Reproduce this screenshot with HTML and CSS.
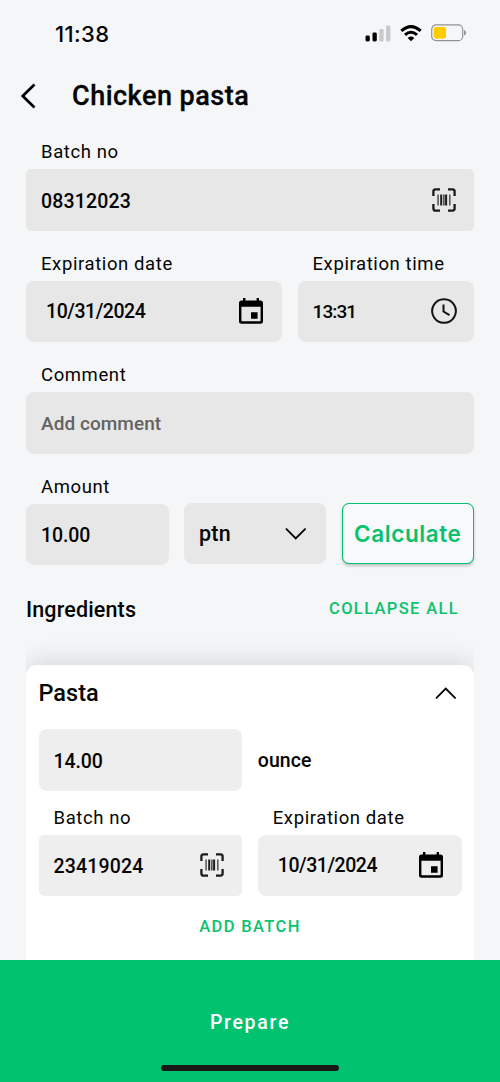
FILE: index.html
```html
<!DOCTYPE html>
<html lang="en">
<head>
<meta charset="utf-8">
<title>Chicken pasta</title>
<link rel="stylesheet" href="styles.css">
</head>
<body>
<svg class="defs" width="0" height="0">
  <symbol id="scan" viewBox="0 0 24 24">
    <path d="M1.400 8V3.400Q1.400 1.400 3.400 1.400H8M16 1.400h4.600q2 0 2 2V8M22.600 16v4.600q0 2-2 2H16M8 22.600H3.400q-2 0-2-2V16" fill="none" stroke="#1b1b1b" stroke-width="2.300"/>
    <path d="M5.500 6.500h1.100v11h-1.100zM8.200 6.500h2v11h-2zM11.300 6.500h1.200v11h-1.200zM13.100 6.500h2v11h-2zM17.300 6.500h1.100v11h-1.100z" fill="#1b1b1b"/>
  </symbol>
  <symbol id="calendar" viewBox="0 0 24 26">
    <path fill-rule="evenodd" d="M4 0h2.400v2.500h11.200V0H20v2.500h1.500Q24 2.500 24 5v18.200q0 2.500-2.500 2.500h-19Q0 25.700 0 23.200V5Q0 2.500 2.500 2.500H4zM2.400 8.800V22.200q0 1 1 1h17.200q1 0 1-1V8.800zM12 14.300h6.600v6.500H12z"/>
  </symbol>
  <symbol id="clock" viewBox="0 0 26 26">
    <path d="M13 1.200a11.800 11.800 0 1 0 .01 0M12.500 6.500v7l6 3.700" fill="none" stroke="#111" stroke-width="2"/>
  </symbol>
</svg>
<div class="screen">
  <div class="status">
    <span class="time">11:38</span>
    <div class="indicators">
      <svg width="26" height="17" viewBox="0 0 26 17">
        <rect x="0.500" y="10.500" width="4.300" height="6" rx="1.400"/>
        <rect x="7.500" y="7.500" width="4.300" height="9" rx="1.400"/>
        <rect x="14.300" y="4" width="4.300" height="12.500" rx="1.400" fill="#c8c9ca"/>
        <rect x="21.100" y="0.500" width="4.300" height="16" rx="1.400" fill="#c8c9ca"/>
      </svg>
      <svg class="wifi" width="22" height="17" viewBox="0 0 22 17">
        <path d="M1.300 5.900Q11-2.700 20.700 5.900M5 9.900Q11 4.700 17 9.900" fill="none" stroke="#000" stroke-width="3"/>
        <path d="M11 16.300L7.700 12.900Q11 10.200 14.300 12.900z"/>
      </svg>
      <svg class="battery" width="36" height="18" viewBox="0 0 36 18">
        <rect x="0.700" y="0.900" width="31" height="15.800" rx="4.500" fill="none" stroke="#929394" stroke-width="1.200"/>
        <rect x="2.700" y="2.900" width="12.400" height="11.800" rx="2.400" fill="#fc0"/>
        <path d="M33 6q2.200.8 2.200 2.800T33 11.600z" fill="#929394"/>
      </svg>
    </div>
  </div>
  <header class="header">
    <svg width="16" height="26" viewBox="0 0 16 26"><path d="M14.500 1.500L2.700 13 14.500 24.500" fill="none" stroke="#000" stroke-width="2.700"/></svg>
    <h1>Chicken pasta</h1>
  </header>
  <main class="form">
    <div class="group">
      <label>Batch no</label>
      <div class="field sharp"><span class="number">08312023</span><svg class="scan"><use href="#scan"/></svg></div>
    </div>
    <div class="row">
      <div class="group date">
        <label>Expiration date</label>
        <div class="field inset"><span class="day">10/31/2024</span><svg class="calendar"><use href="#calendar"/></svg></div>
      </div>
      <div class="group grow">
        <label>Expiration time</label>
        <div class="field"><span class="hour">13:31</span><svg class="clock"><use href="#clock"/></svg></div>
      </div>
    </div>
    <div class="group">
      <label>Comment</label>
      <div class="field"><span class="placeholder">Add comment</span></div>
    </div>
    <div class="row amount">
      <div class="group qty">
        <label>Amount</label>
        <div class="field"><span class="decimal">10.00</span></div>
      </div>
      <div class="field unit"><span>ptn</span>
        <svg class="chevron" viewBox="0 0 22 13"><path d="M1.500 2L11 11.500 20.500 2"/></svg>
      </div>
      <button class="calculate">Calculate</button>
    </div>
    <div class="section">
      <h2>Ingredients</h2>
      <a class="link collapse">COLLAPSE ALL</a>
    </div>
    <div class="list">
      <section class="card">
        <div class="card-head">
          <h3>Pasta</h3>
          <svg class="chevron" viewBox="0 0 22 13"><path d="M1.500 11L11 1.500l9.500 9.500"/></svg>
        </div>
        <div class="pair weight">
          <div class="field"><span class="decimal">14.00</span></div>
          <span class="ounce">ounce</span>
        </div>
        <div class="pair">
          <div class="group">
            <label>Batch no</label>
            <div class="field sharp"><span class="number">23419024</span><svg class="scan"><use href="#scan"/></svg></div>
          </div>
          <div class="group">
            <label>Expiration date</label>
            <div class="field inset"><span class="day">10/31/2024</span><svg class="calendar"><use href="#calendar"/></svg></div>
          </div>
        </div>
        <a class="link add">ADD BATCH</a>
      </section>
    </div>
  </main>
  <footer class="footer">
    <span class="prepare">Prepare</span>
    <div class="home"></div>
  </footer>
</div>
</body>
</html>
```
FILE: styles.css
```css
* { box-sizing: border-box; }
body { margin: 0; font-family: Roboto, sans-serif; color: #050505; }
h1, h2, h3 { margin: 0; font-weight: 500; }
.defs { display: block; position: absolute; }
.screen { width: 500px; height: 1082px; background: #f4f6f8; display: flex; flex-direction: column; overflow: hidden; }
.status { height: 66px; flex: none; padding: 0 33px 0 55px; display: flex; align-items: center; justify-content: space-between; }
.time { font: 500 22px/26px Inter, sans-serif; letter-spacing: 0.35px; padding-top: 1px; }
.indicators { display: flex; align-items: center; }
.wifi { margin-left: 9px; }
.battery { margin-left: 9px; }
.header { height: 75px; flex: none; padding: 17px 20px 0; display: flex; align-items: flex-start; }
.header h1 { font-size: 27px; line-height: 27px; letter-spacing: 0.5px; margin-left: 36px; -webkit-text-stroke: 0.3px; }
.form { flex: 1; min-height: 0; padding: 0 26px; display: flex; flex-direction: column; }
.form > .group, .row { flex: none; margin-bottom: 22px; }
.row { display: flex; gap: 15.500px; }
label { display: block; height: 28px; padding-left: 15px; font-size: 18.500px; line-height: 22px; letter-spacing: 0.6px; white-space: nowrap; }
.field { height: 61.500px; border-radius: 8px; background: #e7e7e7; padding: 0 18px 0 15px; display: flex; align-items: center; justify-content: space-between; font-weight: 500; font-size: 19.500px; white-space: nowrap; }
.sharp { border-radius: 5px; }
.inset { padding-left: 20px; padding-right: 19px; }
.date { width: 256px; }
.grow { flex: 1; }
.number { letter-spacing: 0.15px; padding-top: 3px; }
.day { letter-spacing: -0.45px; padding-top: 1px; }
.hour { font-size: 19px; letter-spacing: -0.900px; padding-top: 1px; }
.decimal { letter-spacing: -0.1px; padding-top: 3px; }
.placeholder { color: #636363; font-size: 19px; letter-spacing: 0.05px; padding-top: 2px; }
.scan { width: 24px; height: 24px; }
.calendar { width: 24px; height: 26px; margin-top: -1px; }
.clock { width: 26px; height: 26px; margin-right: -1px; }
.chevron { width: 21.500px; height: 13px; }
.chevron path { fill: none; stroke: #050505; stroke-width: 1.900; stroke-linecap: round; }
.amount { align-items: flex-end; height: 89.500px; }
.qty { width: 142.500px; flex: none; }
.unit { width: 142px; margin-bottom: 1px; flex: none; font-size: 21.500px; letter-spacing: 0.2px; padding-right: 20px; }
.unit span { padding-top: 1px; }
.calculate { flex: 1; height: 61px; margin-bottom: 1px; padding: 0; border: 1.500px solid #07c16c; outline: 0.5px solid #07c16c80; outline-offset: -1.500px; border-radius: 7px; background: #f7f9fa; box-shadow: 0 2px 3px rgba(0,0,0,.22); color: #07c16c; font: 600 22.500px Inter, sans-serif; letter-spacing: 0.6px; }
.section { flex: none; height: 50px; display: flex; align-items: flex-start; justify-content: space-between; padding: 9px 15px 0 0; }
.section h2 { font-size: 21.500px; line-height: 27px; letter-spacing: 0.150px; }
.link { font-weight: 500; font-size: 16.500px; line-height: 26px; letter-spacing: 1.350px; color: #0bc26e; }
.list { flex: 1; min-height: 0; overflow: hidden; padding-top: 28px; }
.card { height: 100%; background: #fff; border-radius: 11px 11px 0 0; box-shadow: 0 0 28px rgba(0,0,0,.17); padding: 13px 12.500px 0; }
.card-head { display: flex; align-items: center; justify-content: space-between; height: 30px; padding-right: 5px; margin-bottom: 21px; }
.card-head h3 { font-size: 23.500px; line-height: 30px; }
.card .field { background: #eee; }
.card .inset { padding-right: 19px; }
.pair { display: grid; grid-template-columns: 1fr 1fr; column-gap: 15.500px; }
.weight { align-items: center; margin-bottom: 16px; }
.ounce { font-weight: 500; font-size: 19.500px; padding-top: 2px; letter-spacing: 0.1px; }
.add { display: block; text-align: center; line-height: 24px; margin-top: 19px; }
.footer { flex: none; height: 122px; background: #00c26f; display: flex; flex-direction: column; align-items: center; justify-content: space-between; padding: 49px 0 11px; }
.prepare { color: #fff; font-weight: 500; font-size: 19.500px; line-height: 27px; letter-spacing: 1.700px; }
.home { width: 178px; height: 6px; border-radius: 3px; background: #191919; }
```
